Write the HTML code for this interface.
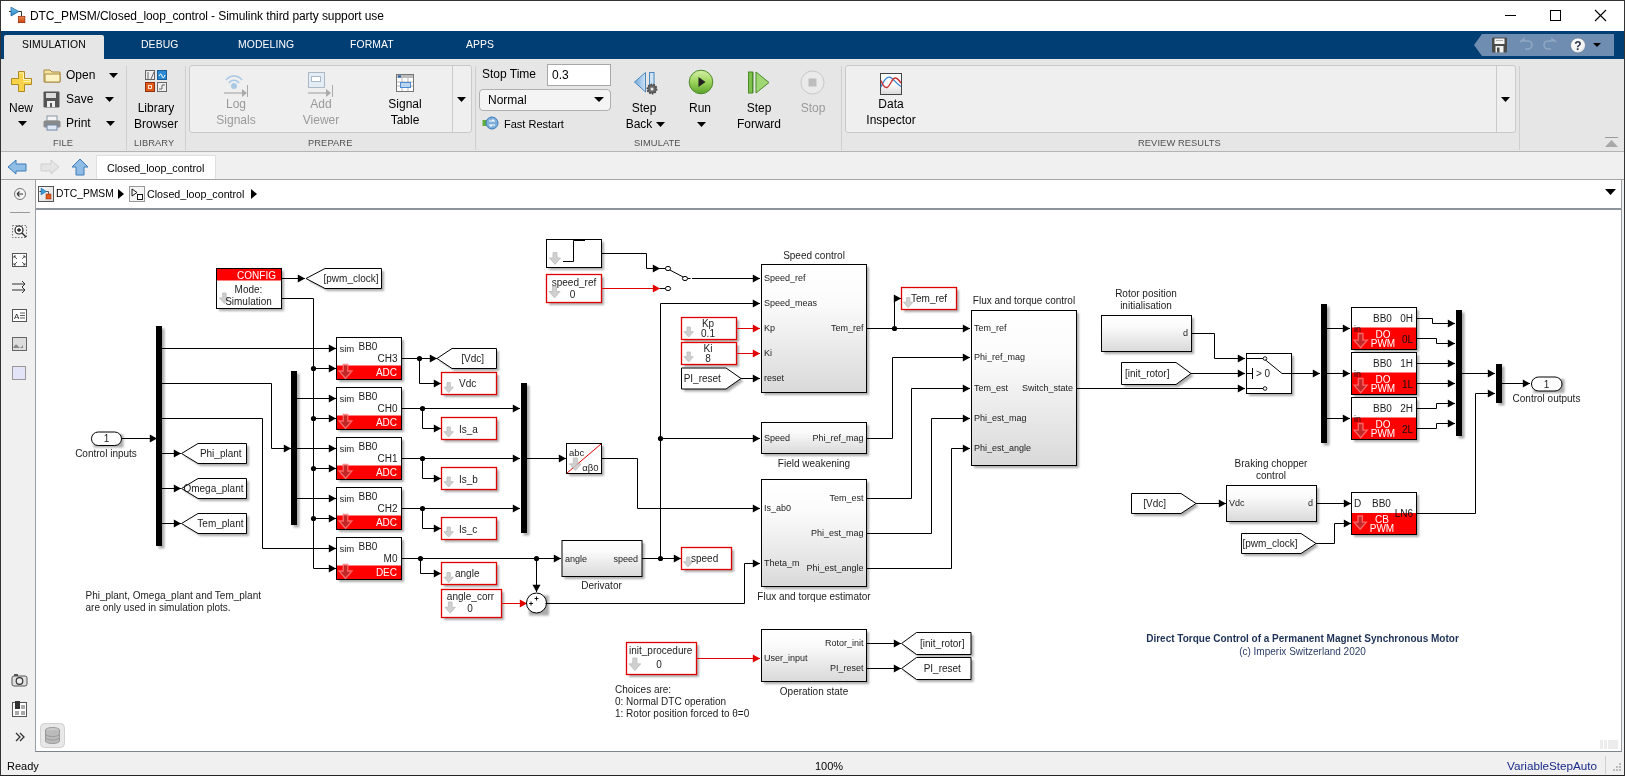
<!DOCTYPE html><html><head><meta charset="utf-8"><title>Simulink</title><style>
*{margin:0;padding:0;box-sizing:border-box}
html,body{width:1625px;height:776px;overflow:hidden;background:#f0f0f0;font-family:"Liberation Sans",sans-serif;color:#000}
#root{position:absolute;left:0;top:0;width:1625px;height:776px;will-change:transform}
.a{position:absolute}
.t{position:absolute;white-space:nowrap;font-size:12px;line-height:14px}
.tab{position:absolute;top:39px;font-size:10.4px;color:#fff;letter-spacing:0.1px}
.lbl{position:absolute;font-size:9.3px;color:#505050;letter-spacing:0.1px;top:138px}
.big{position:absolute;font-size:12px;line-height:16px;text-align:center;white-space:nowrap}
.dis{color:#9a9a9a}
</style></head><body><div id="root"><div class="a" style="left:0;top:0;width:1625px;height:31px;background:#fff"></div>
<svg class="a" style="left:0;top:0" width="30" height="30"><defs><linearGradient id="tig" x1="0" y1="0" x2="0" y2="1"><stop offset="0" stop-color="#7cc8f0"/><stop offset="1" stop-color="#1f7cc4"/></linearGradient><linearGradient id="tsg" x1="0" y1="0" x2="0" y2="1"><stop offset="0" stop-color="#f08a50"/><stop offset="1" stop-color="#c8400c"/></linearGradient></defs><line x1="9" y1="11.5" x2="11" y2="11.5" stroke="#333"/><polyline points="18.5,11.5 21.5,11.5 21.5,16" fill="none" stroke="#333"/><polygon points="11,7.2 11,16 19,11.5" fill="url(#tig)" stroke="#1a5e9a" stroke-width="0.7"/><rect x="18.3" y="16.3" width="6.6" height="6.4" fill="url(#tsg)" stroke="#8a2a08" stroke-width="0.7"/></svg>
<div class="t" style="left:30px;top:9px;font-size:12px;letter-spacing:-0.08px;color:#000">DTC_PMSM/Closed_loop_control - Simulink third party support use</div>
<svg class="a" style="left:1490px;top:0" width="135" height="31"><line x1="15" y1="15.5" x2="26" y2="15.5" stroke="#000"/><rect x="60.5" y="10.5" width="10" height="10" fill="none" stroke="#000"/><line x1="105" y1="10" x2="116" y2="21" stroke="#000" stroke-width="1.1"/><line x1="116" y1="10" x2="105" y2="21" stroke="#000" stroke-width="1.1"/></svg>
<div class="a" style="left:0;top:31px;width:1625px;height:28px;background:#003e73"></div>
<div class="a" style="left:4px;top:35px;width:100px;height:24px;background:#e6e6e6;border-radius:2px 2px 0 0"></div>
<div class="tab" style="left:22px;color:#000">SIMULATION</div>
<div class="tab" style="left:141px">DEBUG</div>
<div class="tab" style="left:238px">MODELING</div>
<div class="tab" style="left:350px">FORMAT</div>
<div class="tab" style="left:466px">APPS</div>
<svg class="a" style="left:1474px;top:34px" width="142" height="23"><polygon points="0,11 8,0 140,0 140,22 8,22" fill="#6f8db0"/><rect x="18" y="3.5" width="15" height="15" rx="1" fill="#4a4a4a"/><rect x="20.5" y="4.5" width="10" height="5.5" fill="#f4f4f4"/><line x1="22" y1="6.5" x2="29" y2="6.5" stroke="#999" stroke-width="0.8"/><rect x="21.5" y="12" width="8" height="6.5" fill="#f0f0f0"/><rect x="23" y="13.5" width="2.5" height="5" fill="#4a4a4a"/><path d="M46,8 l4,-3 v2 h4 a4,4 0 0 1 0,8 h-3" fill="none" stroke="#8fa7c3" stroke-width="1.6"/><path d="M82,8 l-4,-3 v2 h-4 a4,4 0 0 0 0,8 h3" fill="none" stroke="#8fa7c3" stroke-width="1.6"/><defs><radialGradient id="hg" cx="0.4" cy="0.3" r="0.8"><stop offset="0" stop-color="#fff"/><stop offset="0.7" stop-color="#f0f0f0"/><stop offset="1" stop-color="#b8c4d4"/></radialGradient></defs><circle cx="104" cy="11.5" r="7.5" fill="url(#hg)" stroke="#5a6f8c" stroke-width="0.6"/><text x="104" y="16" font-size="12" font-weight="bold" fill="#25324a" text-anchor="middle" font-family="Liberation Sans">?</text><polygon points="119,9 127,9 123,13" fill="#000"/></svg>
<div class="a" style="left:1px;top:59px;width:1623px;height:93px;background:#e6e6e6;border-bottom:1px solid #b4b4b4"></div>
<div class="a" style="left:126px;top:66px;width:1px;height:84px;background:#cfcfcf"></div>
<div class="a" style="left:185px;top:66px;width:1px;height:84px;background:#cfcfcf"></div>
<div class="a" style="left:475px;top:66px;width:1px;height:84px;background:#cfcfcf"></div>
<div class="a" style="left:841px;top:66px;width:1px;height:84px;background:#cfcfcf"></div>
<div class="a" style="left:1519px;top:66px;width:1px;height:84px;background:#cfcfcf"></div>
<div class="a" style="left:189px;top:65px;width:283px;height:68px;background:#efefef;border:1px solid #cacaca;border-radius:3px"></div>
<div class="a" style="left:452px;top:66px;width:1px;height:66px;background:#cacaca"></div>
<div class="a" style="left:845px;top:65px;width:671px;height:68px;background:#efefef;border:1px solid #cacaca;border-radius:3px"></div>
<div class="a" style="left:1496px;top:66px;width:1px;height:66px;background:#cacaca"></div>
<svg class="a" style="left:457px;top:97px" width="9" height="6"><polygon points="0,0 9,0 4.5,5" fill="#000"/></svg>
<svg class="a" style="left:1501px;top:97px" width="9" height="6"><polygon points="0,0 9,0 4.5,5" fill="#000"/></svg>
<svg class="a" style="left:10px;top:70px" width="24" height="24"><path d="M8.5,1.5 h6 v7 h7 v6 h-7 v7 h-6 v-7 h-7 v-6 h7 z" fill="#f7d34a" stroke="#b08a20" stroke-width="1"/><path d="M9.5,3 h4 v6.5 h7 v2 h-7" fill="none" stroke="#fff6c0" stroke-width="1"/></svg>
<div class="big" style="left:6px;top:100px;width:30px">New</div>
<svg class="a" style="left:17.5px;top:121px" width="9" height="6"><polygon points="0,0 9,0 4.5,5" fill="#000"/></svg>
<svg class="a" style="left:43px;top:68px" width="18" height="15"><path d="M1,2 h6 l2,2 h8 v10 h-16 z" fill="#f3e3a0" stroke="#a88a40"/><path d="M2,6 h15 v8 h-15 z" fill="#fdf2c4" stroke="#a88a40"/></svg>
<div class="t" style="left:66px;top:68px">Open</div>
<svg class="a" style="left:109px;top:73px" width="9" height="6"><polygon points="0,0 9,0 4.5,5" fill="#000"/></svg>
<svg class="a" style="left:43px;top:91px" width="17" height="17"><rect x="0.5" y="0.5" width="16" height="16" rx="1" fill="#555"/><rect x="3" y="2" width="10" height="5" fill="#ddd"/><rect x="4" y="10" width="8" height="6" fill="#eee"/><rect x="7" y="12" width="2" height="4" fill="#555"/></svg>
<div class="t" style="left:66px;top:92px">Save</div>
<svg class="a" style="left:105px;top:97px" width="9" height="6"><polygon points="0,0 9,0 4.5,5" fill="#000"/></svg>
<svg class="a" style="left:43px;top:115px" width="18" height="16"><rect x="4" y="1" width="10" height="5" fill="#f4f4f4" stroke="#8a98a8"/><rect x="0.5" y="5.5" width="17" height="7" rx="1.5" fill="#8a8a8a"/><rect x="4" y="10" width="10" height="5" fill="#dfe8f3" stroke="#6d87a8"/></svg>
<div class="t" style="left:66px;top:116px">Print</div>
<svg class="a" style="left:106px;top:121px" width="9" height="6"><polygon points="0,0 9,0 4.5,5" fill="#000"/></svg>
<div class="lbl" style="left:53px">FILE</div>
<svg class="a" style="left:145px;top:70px" width="23" height="24"><rect x="0.5" y="0.5" width="9" height="9" fill="#eee" stroke="#666"/><path d="M3,9 v-7 M6,9 l3,-7" stroke="#666"/><rect x="12.5" y="0.5" width="9" height="9" fill="#2a8ad4" stroke="#1a5e9a"/><path d="M14,6 q2,-4 3,0 t3,-1" stroke="#fff" fill="none"/><rect x="0.5" y="12.5" width="9" height="9" fill="#e05a1a" stroke="#903010"/><rect x="3.5" y="15.5" width="3" height="3" fill="none" stroke="#fff" stroke-width="0.8"/><rect x="12.5" y="12.5" width="9" height="9" fill="#eee" stroke="#666"/><path d="M14,19 h3 v-4 h3" stroke="#666" fill="none"/></svg>
<div class="big" style="left:131px;top:100px;width:50px">Library<br>Browser</div>
<div class="lbl" style="left:134px">LIBRARY</div>
<svg class="a" style="left:223px;top:72px" width="27" height="25"><path d="M3,8 a10,10 0 0 1 16,0 M6,11 a6,6 0 0 1 10,0" stroke="#a9c8e6" stroke-width="1.6" fill="none"/><circle cx="11" cy="14" r="3" fill="#a9c8e6"/><line x1="1" y1="21" x2="20" y2="21" stroke="#aaa" stroke-width="1.2"/><polygon points="19,17 19,25 24,21" fill="#aaa"/><line x1="24.5" y1="13" x2="24.5" y2="25" stroke="#aaa"/></svg>
<div class="big dis" style="left:211px;top:96px;width:50px">Log<br>Signals</div>
<svg class="a" style="left:308px;top:72px" width="26" height="25"><rect x="0.5" y="0.5" width="16" height="15" fill="#e4ecf4" stroke="#aab8c8"/><rect x="3.5" y="4.5" width="9" height="5" fill="#fff" stroke="#aab8c8"/><line x1="0" y1="21" x2="19" y2="21" stroke="#aaa" stroke-width="1.2"/><polygon points="18,17 18,25 23,21" fill="#aaa"/><line x1="24.5" y1="13" x2="24.5" y2="25" stroke="#aaa"/></svg>
<div class="big dis" style="left:296px;top:96px;width:50px">Add<br>Viewer</div>
<svg class="a" style="left:396px;top:74px" width="19" height="19"><rect x="0.5" y="0.5" width="17" height="17" fill="#fff" stroke="#777"/><rect x="1" y="1" width="16" height="3" fill="#bbb"/><rect x="2" y="1.5" width="3" height="2" fill="#1f5fb0"/><path d="M1,8 h16 M1,12 h16 M6,4 v13 M12,4 v13" stroke="#999" stroke-width="0.7"/><rect x="4.5" y="8.5" width="10" height="5" fill="#b9d5f0" stroke="#4d8ad0"/></svg>
<div class="big" style="left:380px;top:96px;width:50px">Signal<br>Table</div>
<div class="lbl" style="left:308px">PREPARE</div>
<div class="t" style="left:482px;top:67px">Stop Time</div>
<div class="a" style="left:547px;top:64px;width:64px;height:22px;background:#fff;border:1px solid #a8a8a8"></div>
<div class="t" style="left:552px;top:68px">0.3</div>
<div class="a" style="left:479px;top:89px;width:132px;height:22px;background:#f4f4f4;border:1px solid #b0b0b0;border-radius:4px"></div>
<div class="t" style="left:488px;top:93px">Normal</div>
<svg class="a" style="left:593.5px;top:97px" width="10" height="6"><polygon points="0,0 10,0 5.0,5" fill="#000"/></svg>
<svg class="a" style="left:482px;top:116px" width="17" height="14"><rect x="0.5" y="4" width="5" height="6" fill="#5fae3c"/><circle cx="10" cy="7" r="6" fill="#7fb0dc" stroke="#3e79b8"/><path d="M7,5 h5 l-1.5,-1.5 M13,9 h-5 l1.5,1.5" stroke="#fff" fill="none" stroke-width="1.1"/></svg>
<div class="t" style="left:504px;top:117px;font-size:11px">Fast Restart</div>
<svg class="a" style="left:633px;top:71px" width="25" height="24"><defs><linearGradient id="sbg" x1="0" y1="0" x2="1" y2="0"><stop offset="0" stop-color="#6fa8dc"/><stop offset="1" stop-color="#cfe3f5"/></linearGradient></defs><polygon points="12.5,1.5 12.5,21 1.5,11" fill="url(#sbg)" stroke="#4b86bd"/><rect x="16.5" y="1.5" width="4.5" height="15" fill="#cfe3f5" stroke="#4b86bd"/><circle cx="19" cy="18" r="4.6" fill="#555" stroke="#444" stroke-width="1.6" stroke-dasharray="1.6,1.2"/><circle cx="19" cy="18" r="3.6" fill="#6a6a6a"/><circle cx="19" cy="18" r="1.5" fill="#e8e8e8"/></svg>
<div class="big" style="left:620px;top:100px;width:48px">Step<br>Back&nbsp;&nbsp;&nbsp;</div>
<svg class="a" style="left:656px;top:122px" width="9" height="6"><polygon points="0,0 9,0 4.5,5" fill="#000"/></svg>
<svg class="a" style="left:688px;top:69px" width="26" height="26"><defs><linearGradient id="rng" x1="0" y1="0" x2="0" y2="1"><stop offset="0" stop-color="#d6f0a8"/><stop offset="0.5" stop-color="#9cd45c"/><stop offset="1" stop-color="#5aa02a"/></linearGradient></defs><circle cx="13" cy="13" r="11.8" fill="url(#rng)" stroke="#4d8a2a"/><polygon points="10.5,8 10.5,18 17.5,13" fill="#222"/></svg>
<div class="big" style="left:680px;top:100px;width:40px">Run</div>
<svg class="a" style="left:696.5px;top:122px" width="9" height="6"><polygon points="0,0 9,0 4.5,5" fill="#000"/></svg>
<svg class="a" style="left:748px;top:71px" width="24" height="23"><rect x="0.5" y="1" width="4" height="21" fill="#7cc14a" stroke="#4d8a2a"/><polygon points="8,1 8,22 21,11.5" fill="#9fd873" stroke="#4d8a2a"/><line x1="5" y1="1" x2="5" y2="22" stroke="#4d8a2a"/></svg>
<div class="big" style="left:730px;top:100px;width:58px">Step<br>Forward</div>
<svg class="a" style="left:800px;top:70px" width="25" height="25"><circle cx="12.5" cy="12.5" r="11.5" fill="#eaeaea" stroke="#c8c8c8"/><rect x="8.5" y="8.5" width="8" height="8" fill="#bdbdbd"/></svg>
<div class="big dis" style="left:792px;top:100px;width:42px">Stop</div>
<div class="lbl" style="left:634px">SIMULATE</div>
<svg class="a" style="left:880px;top:73px" width="23" height="22"><defs><linearGradient id="dig" x1="0" y1="0" x2="0" y2="1"><stop offset="0.5" stop-color="#fff"/><stop offset="1" stop-color="#d8d8d8"/></linearGradient></defs><rect x="0.5" y="0.5" width="21" height="21" fill="url(#dig)" stroke="#444"/><path d="M1,14 C5,4 9,3 11.5,5 S17,11 21,13.5" stroke="#3a86d0" fill="none" stroke-width="1.4"/><path d="M1,7.5 C3,13 5,15 7,14.5 C10,13.5 12,5 15,5 C17.5,5 19,7 21,10" stroke="#c83030" fill="none" stroke-width="1.4"/></svg>
<div class="big" style="left:861px;top:96px;width:60px">Data<br>Inspector</div>
<div class="lbl" style="left:1138px">REVIEW RESULTS</div>
<svg class="a" style="left:1604px;top:137px" width="15" height="12"><line x1="1" y1="0.5" x2="14" y2="0.5" stroke="#999"/><polygon points="1,10 14,10 7.5,3" fill="#a8a8a8"/></svg>
<div class="a" style="left:1px;top:152px;width:1623px;height:28px;background:#f0f0f0;border-bottom:1px solid #a4a4a4"></div>
<svg class="a" style="left:7px;top:158px" width="90" height="19"><polygon points="1,9 9,2 9,6 19,6 19,13 9,13 9,16" fill="#8fbde6" stroke="#3c7ab8"/><polygon points="59,9 51,2 51,6 41,6 41,13 51,13 51,16" fill="#e4e4e4" stroke="#cfcfcf" transform="translate(-7,0)"/><polygon points="73,1 81,9 77,9 77,17 69,17 69,9 65,9" fill="#8fbde6" stroke="#3c7ab8"/></svg>
<div class="a" style="left:96px;top:155px;width:120px;height:24px;background:#fff;border:1px solid #e0e0e0;border-bottom:none"></div>
<div class="t" style="left:107px;top:161px;font-size:10.7px">Closed_loop_control</div>
<div class="a" style="left:35px;top:179px;width:1px;height:573px;background:#a0a0a0"></div>
<div class="a" style="left:36px;top:180px;width:1586px;height:30px;background:#fff;border-bottom:2px solid #8e949c;border-right:1px solid #9aa0a8"></div>
<svg class="a" style="left:38px;top:186px" width="230" height="16"><rect x="0.5" y="0.5" width="15" height="15" fill="url(#bcg)" stroke="#555"/><defs><linearGradient id="bcg" x1="0" y1="0" x2="1" y2="1"><stop offset="0" stop-color="#fafafa"/><stop offset="1" stop-color="#dcdcdc"/></linearGradient></defs><line x1="1.5" y1="5.5" x2="3" y2="5.5" stroke="#333"/><polyline points="8,5.5 10.5,5.5 10.5,8" fill="none" stroke="#333" stroke-width="0.8"/><polygon points="3,2 3,9 8.5,5.5" fill="#3a9ad8" stroke="#1a5e9a" stroke-width="0.5"/><rect x="8" y="8" width="5" height="5" fill="#e05a1a" stroke="#8a2a08" stroke-width="0.5"/><polygon points="80,3 80,13 86,8" fill="#000"/><rect x="91.5" y="0.5" width="15" height="15" fill="#f4f4f4" stroke="#999"/><polygon points="94,3 94,10 99,6.5" fill="none" stroke="#000" stroke-width="0.9"/><rect x="99.5" y="8.5" width="5" height="5" fill="#fff" stroke="#000" stroke-width="0.9"/><polygon points="213,3 213,13 219,8" fill="#000"/></svg>
<div class="t" style="left:56px;top:187px;font-size:10.3px">DTC_PMSM</div>
<div class="t" style="left:147px;top:187px;font-size:10.7px">Closed_loop_control</div>
<svg class="a" style="left:1605px;top:189px" width="12" height="7"><polygon points="0,0 11,0 5.5,6" fill="#000"/></svg>
<svg class="a" style="left:6px;top:182px" width="30" height="570"><circle cx="14" cy="12" r="5.5" fill="#f4f4f4" stroke="#777"/><path d="M11,12 h6 M11,12 l2.5,-2.5 M11,12 l2.5,2.5" stroke="#333" stroke-width="1.1"/><line x1="4" y1="30.5" x2="24" y2="30.5" stroke="#999"/><rect x="6.5" y="43.5" width="14" height="12" fill="none" stroke="#777" stroke-dasharray="1.5,1.5"/><circle cx="13" cy="48" r="4" fill="#fff" stroke="#222" stroke-width="1.2"/><path d="M11,48 h4 M13,46 v4 M16,51 l4,4" stroke="#222" stroke-width="1.3"/><rect x="6.5" y="71.5" width="14" height="13" fill="#fff" stroke="#555"/><path d="M8,74 l3,3 M8,74 h2 M8,74 v2 M19,74 l-3,3 M19,74 h-2 M19,74 v2 M8,83 l3,-3 M8,83 h2 M8,83 v-2 M19,83 l-3,-3 M19,83 h-2 M19,83 v-2" stroke="#333" stroke-width="0.8"/><path d="M6,102 h13 M6,108 h13 M16,99 l3,3 l-3,3 M16,105 l3,3 l-3,3" stroke="#333" fill="none"/><rect x="6.5" y="127.5" width="14" height="12" fill="#fff" stroke="#555"/><text x="8" y="137" font-size="8" font-family="Liberation Sans" fill="#222">A</text><path d="M14,131 h5 M14,133.5 h5 M14,136 h5" stroke="#333" stroke-width="0.8"/><rect x="6.5" y="155.5" width="14" height="13" fill="#ddd" stroke="#666"/><path d="M7,166 q3,-6 5,-2 t5,-1 v3 h-10 z" fill="#888"/><rect x="6.5" y="184.5" width="13" height="13" fill="#e4e4f8" stroke="#999"/><rect x="6" y="494" width="15" height="10" rx="2" fill="#e0e0e0" stroke="#555"/><circle cx="13.5" cy="499" r="3.3" fill="#eee" stroke="#333" stroke-width="1.2"/><rect x="8" y="492" width="4" height="2" fill="#555"/><rect x="6.5" y="520.5" width="14" height="14" fill="#fff" stroke="#555"/><rect x="9" y="519" width="5" height="8" fill="#333"/><rect x="15" y="523" width="4" height="4" fill="#aaa"/><rect x="9" y="529" width="4" height="4" fill="#aaa"/><rect x="15" y="529" width="4" height="4" fill="#aaa"/><path d="M10,551 l4,4 l-4,4 M14,551 l4,4 l-4,4" stroke="#333" fill="none" stroke-width="1.3"/></svg>
<div class="a" style="left:35px;top:210px;width:1587px;height:542px;background:#fff;border-left:1px solid #9aa0a8;border-bottom:1px solid #7e848c;border-right:1px solid #9aa0a8"></div>
<svg class="a" style="left:40px;top:723px" width="26" height="26"><rect x="0.5" y="0.5" width="24" height="24" rx="4" fill="#e8e8e8" stroke="#d0d0d0"/><ellipse cx="12.5" cy="7" rx="7" ry="2.5" fill="#ccc" stroke="#999"/><path d="M5.5,7 v11 a7,2.5 0 0 0 14,0 v-11" fill="#bbb" stroke="#999"/><path d="M5.5,11 a7,2.5 0 0 0 14,0 M5.5,14.5 a7,2.5 0 0 0 14,0" fill="none" stroke="#999"/></svg>
<svg class="a" style="left:1600px;top:740px" width="20" height="10"><rect x="0" y="0" width="3" height="9" fill="#ececec"/><rect x="4" y="0" width="3" height="9" fill="#ececec"/><rect x="8" y="0" width="10" height="9" fill="#ececec"/></svg>
<svg class="a" style="left:0;top:0" width="1625" height="776" font-family="Liberation Sans, sans-serif"><defs><filter id="sh" x="-20%" y="-20%" width="140%" height="140%"><feGaussianBlur stdDeviation="1.2"/></filter><linearGradient id="grad" x1="0" y1="0" x2="0" y2="1"><stop offset="0" stop-color="#ffffff"/><stop offset="0.3" stop-color="#fbfbfb"/><stop offset="1" stop-color="#d9d9d9"/></linearGradient></defs><rect x="219" y="271" width="65" height="40" fill="#000" opacity="0.33" filter="url(#sh)"/>
<rect x="216.5" y="268.5" width="65" height="40" fill="#fff" stroke="#000" stroke-width="1"/>
<rect x="217" y="269" width="64" height="11.5" fill="#ff0000"/>
<text x="276" y="279" font-size="10" text-anchor="end" fill="#fff" font-weight="normal" >CONFIG</text>
<text x="248.5" y="293" font-size="10" text-anchor="middle" fill="#1c1c1c" font-weight="normal" >Mode:</text>
<polygon points="222.65,293 226.1,293 226.1,297.88 229.25,297.88 224.38,303.5 219.5,297.88 222.65,297.88" fill="#c8c8c8" stroke="#b0b0b0" stroke-width="0.8" opacity="0.85"/>
<text x="248.5" y="304.5" font-size="10" text-anchor="middle" fill="#1c1c1c" font-weight="normal" >Simulation</text>
<polyline points="282,278.5 305,278.5" fill="none" stroke="#000" stroke-width="1" />
<polygon points="305,278.5 297.8,274.5 297.8,282.5" fill="#000"/>
<polygon points="308.5,281 327.5,271 384,271 384,291 327.5,291" fill="#000" opacity="0.33" filter="url(#sh)"/>
<polygon points="306,278.5 325,268.5 381.5,268.5 381.5,288.5 325,288.5" fill="#fff" stroke="#000" stroke-width="1"/>
<text x="378.5" y="282.1" font-size="10" text-anchor="end" fill="#1c1c1c" font-weight="normal" >[pwm_clock]</text>
<polyline points="282,298.5 313.5,298.5 313.5,568.5 336,568.5" fill="none" stroke="#000" stroke-width="1" />
<polygon points="336,568.5 328.8,564.5 328.8,572.5" fill="#000"/>
<circle cx="313.5" cy="368.5" r="2.6" fill="#000"/>
<polyline points="313.5,368.5 336,368.5" fill="none" stroke="#000" stroke-width="1" />
<polygon points="336,368.5 328.8,364.5 328.8,372.5" fill="#000"/>
<circle cx="313.5" cy="418.5" r="2.6" fill="#000"/>
<polyline points="313.5,418.5 336,418.5" fill="none" stroke="#000" stroke-width="1" />
<polygon points="336,418.5 328.8,414.5 328.8,422.5" fill="#000"/>
<circle cx="313.5" cy="468.5" r="2.6" fill="#000"/>
<polyline points="313.5,468.5 336,468.5" fill="none" stroke="#000" stroke-width="1" />
<polygon points="336,468.5 328.8,464.5 328.8,472.5" fill="#000"/>
<circle cx="313.5" cy="518.5" r="2.6" fill="#000"/>
<polyline points="313.5,518.5 336,518.5" fill="none" stroke="#000" stroke-width="1" />
<polygon points="336,518.5 328.8,514.5 328.8,522.5" fill="#000"/>
<rect x="158.5" y="328.5" width="6" height="220" fill="#000" opacity="0.33" filter="url(#sh)"/>
<rect x="156" y="326" width="6" height="220" fill="#000"/>
<polyline points="162,348.5 336,348.5" fill="none" stroke="#000" stroke-width="1" />
<polygon points="336,348.5 328.8,344.5 328.8,352.5" fill="#000"/>
<polyline points="162,383.5 271.5,383.5 271.5,448.5 291,448.5" fill="none" stroke="#000" stroke-width="1" />
<polygon points="291,448.5 283.8,444.5 283.8,452.5" fill="#000"/>
<polyline points="162,418.5 262.5,418.5 262.5,548.5 336,548.5" fill="none" stroke="#000" stroke-width="1" />
<polygon points="336,548.5 328.8,544.5 328.8,552.5" fill="#000"/>
<polyline points="162,453.5 181,453.5" fill="none" stroke="#000" stroke-width="1" />
<polygon points="181,453.5 173.8,449.5 173.8,457.5" fill="#000"/>
<polygon points="184,456 200.5,446 249,446 249,466 200.5,466" fill="#000" opacity="0.33" filter="url(#sh)"/>
<polygon points="181.5,453.5 198,443.5 246.5,443.5 246.5,463.5 198,463.5" fill="#fff" stroke="#000" stroke-width="1"/>
<text x="220.75" y="457.1" font-size="10" text-anchor="middle" fill="#1c1c1c" font-weight="normal" >Phi_plant</text>
<polyline points="162,488.5 181,488.5" fill="none" stroke="#000" stroke-width="1" />
<polygon points="181,488.5 173.8,484.5 173.8,492.5" fill="#000"/>
<polygon points="184,491 200.5,481 249,481 249,501 200.5,501" fill="#000" opacity="0.33" filter="url(#sh)"/>
<polygon points="181.5,488.5 198,478.5 246.5,478.5 246.5,498.5 198,498.5" fill="#fff" stroke="#000" stroke-width="1"/>
<text x="243.5" y="492.1" font-size="10" text-anchor="end" fill="#1c1c1c" font-weight="normal" >Omega_plant</text>
<polyline points="162,523.5 181,523.5" fill="none" stroke="#000" stroke-width="1" />
<polygon points="181,523.5 173.8,519.5 173.8,527.5" fill="#000"/>
<polygon points="184,526 200.5,516 249,516 249,536 200.5,536" fill="#000" opacity="0.33" filter="url(#sh)"/>
<polygon points="181.5,523.5 198,513.5 246.5,513.5 246.5,533.5 198,533.5" fill="#fff" stroke="#000" stroke-width="1"/>
<text x="243.5" y="527.1" font-size="10" text-anchor="end" fill="#1c1c1c" font-weight="normal" >Tem_plant</text>
<rect x="93.5" y="434.5" width="30" height="13" fill="#000" opacity="0.33" filter="url(#sh)"/>
<rect x="91.5" y="432" width="30" height="13.5" rx="6.7" fill="#fff" stroke="#000"/>
<text x="106.5" y="442" font-size="10" text-anchor="middle" fill="#1c1c1c" font-weight="normal" >1</text>
<text x="106" y="457" font-size="10" text-anchor="middle" fill="#1c1c1c" font-weight="normal" >Control inputs</text>
<polyline points="121.5,438.5 157,438.5" fill="none" stroke="#000" stroke-width="1" />
<polygon points="157,438.5 149.8,434.5 149.8,442.5" fill="#000"/>
<rect x="293.5" y="373.5" width="6" height="154" fill="#000" opacity="0.33" filter="url(#sh)"/>
<rect x="291" y="371" width="6" height="154" fill="#000"/>
<polyline points="297,398.5 336,398.5" fill="none" stroke="#000" stroke-width="1" />
<polygon points="336,398.5 328.8,394.5 328.8,402.5" fill="#000"/>
<polyline points="297,448.5 336,448.5" fill="none" stroke="#000" stroke-width="1" />
<polygon points="336,448.5 328.8,444.5 328.8,452.5" fill="#000"/>
<polyline points="297,498.5 336,498.5" fill="none" stroke="#000" stroke-width="1" />
<polygon points="336,498.5 328.8,494.5 328.8,502.5" fill="#000"/>
<rect x="339" y="340" width="65" height="42" fill="#000" opacity="0.33" filter="url(#sh)"/>
<rect x="336.5" y="337.5" width="65" height="42" fill="#fff" stroke="#000" stroke-width="1"/>
<rect x="337" y="365.5" width="64" height="13.5" fill="#ff0000"/>
<text x="339.5" y="351.5" font-size="9.5" text-anchor="start" fill="#1c1c1c" font-weight="normal" >sim</text>
<text x="358.5" y="350" font-size="10" text-anchor="start" fill="#1c1c1c" font-weight="normal" >BB0</text>
<text x="397.5" y="362" font-size="10" text-anchor="end" fill="#1c1c1c" font-weight="normal" >CH3</text>
<text x="397" y="375.8" font-size="10" text-anchor="end" fill="#fff" font-weight="normal" >ADC</text>
<polygon points="343.2,364.5 347.8,364.5 347.8,371 352,371 345.5,378.5 339,371 343.2,371" fill="#b83030" stroke="#ff7a7a" stroke-width="1.3" opacity="0.85"/>
<rect x="339" y="390" width="65" height="42" fill="#000" opacity="0.33" filter="url(#sh)"/>
<rect x="336.5" y="387.5" width="65" height="42" fill="#fff" stroke="#000" stroke-width="1"/>
<rect x="337" y="415.5" width="64" height="13.5" fill="#ff0000"/>
<text x="339.5" y="401.5" font-size="9.5" text-anchor="start" fill="#1c1c1c" font-weight="normal" >sim</text>
<text x="358.5" y="400" font-size="10" text-anchor="start" fill="#1c1c1c" font-weight="normal" >BB0</text>
<text x="397.5" y="412" font-size="10" text-anchor="end" fill="#1c1c1c" font-weight="normal" >CH0</text>
<text x="397" y="425.8" font-size="10" text-anchor="end" fill="#fff" font-weight="normal" >ADC</text>
<polygon points="343.2,414.5 347.8,414.5 347.8,421 352,421 345.5,428.5 339,421 343.2,421" fill="#b83030" stroke="#ff7a7a" stroke-width="1.3" opacity="0.85"/>
<rect x="339" y="440" width="65" height="42" fill="#000" opacity="0.33" filter="url(#sh)"/>
<rect x="336.5" y="437.5" width="65" height="42" fill="#fff" stroke="#000" stroke-width="1"/>
<rect x="337" y="465.5" width="64" height="13.5" fill="#ff0000"/>
<text x="339.5" y="451.5" font-size="9.5" text-anchor="start" fill="#1c1c1c" font-weight="normal" >sim</text>
<text x="358.5" y="450" font-size="10" text-anchor="start" fill="#1c1c1c" font-weight="normal" >BB0</text>
<text x="397.5" y="462" font-size="10" text-anchor="end" fill="#1c1c1c" font-weight="normal" >CH1</text>
<text x="397" y="475.8" font-size="10" text-anchor="end" fill="#fff" font-weight="normal" >ADC</text>
<polygon points="343.2,464.5 347.8,464.5 347.8,471 352,471 345.5,478.5 339,471 343.2,471" fill="#b83030" stroke="#ff7a7a" stroke-width="1.3" opacity="0.85"/>
<rect x="339" y="490" width="65" height="42" fill="#000" opacity="0.33" filter="url(#sh)"/>
<rect x="336.5" y="487.5" width="65" height="42" fill="#fff" stroke="#000" stroke-width="1"/>
<rect x="337" y="515.5" width="64" height="13.5" fill="#ff0000"/>
<text x="339.5" y="501.5" font-size="9.5" text-anchor="start" fill="#1c1c1c" font-weight="normal" >sim</text>
<text x="358.5" y="500" font-size="10" text-anchor="start" fill="#1c1c1c" font-weight="normal" >BB0</text>
<text x="397.5" y="512" font-size="10" text-anchor="end" fill="#1c1c1c" font-weight="normal" >CH2</text>
<text x="397" y="525.8" font-size="10" text-anchor="end" fill="#fff" font-weight="normal" >ADC</text>
<polygon points="343.2,514.5 347.8,514.5 347.8,521 352,521 345.5,528.5 339,521 343.2,521" fill="#b83030" stroke="#ff7a7a" stroke-width="1.3" opacity="0.85"/>
<rect x="339" y="540" width="65" height="42" fill="#000" opacity="0.33" filter="url(#sh)"/>
<rect x="336.5" y="537.5" width="65" height="42" fill="#fff" stroke="#000" stroke-width="1"/>
<rect x="337" y="565.5" width="64" height="13.5" fill="#ff0000"/>
<text x="339.5" y="551.5" font-size="9.5" text-anchor="start" fill="#1c1c1c" font-weight="normal" >sim</text>
<text x="358.5" y="550" font-size="10" text-anchor="start" fill="#1c1c1c" font-weight="normal" >BB0</text>
<text x="397.5" y="562" font-size="10" text-anchor="end" fill="#1c1c1c" font-weight="normal" >M0</text>
<text x="397" y="575.8" font-size="10" text-anchor="end" fill="#fff" font-weight="normal" >DEC</text>
<polygon points="343.2,564.5 347.8,564.5 347.8,571 352,571 345.5,578.5 339,571 343.2,571" fill="#b83030" stroke="#ff7a7a" stroke-width="1.3" opacity="0.85"/>
<polyline points="401.5,358.5 437,358.5" fill="none" stroke="#000" stroke-width="1" />
<polygon points="437,358.5 429.8,354.5 429.8,362.5" fill="#000"/>
<circle cx="419.5" cy="358.5" r="2.6" fill="#000"/>
<polyline points="419.5,358.5 419.5,383.5 441,383.5" fill="none" stroke="#000" stroke-width="1" />
<polygon points="441,383.5 433.8,379.5 433.8,387.5" fill="#000"/>
<polygon points="439.5,361 454.5,351 499,351 499,371 454.5,371" fill="#000" opacity="0.33" filter="url(#sh)"/>
<polygon points="437,358.5 452,348.5 496.5,348.5 496.5,368.5 452,368.5" fill="#fff" stroke="#000" stroke-width="1"/>
<text x="472.75" y="362.1" font-size="10" text-anchor="middle" fill="#1c1c1c" font-weight="normal" >[Vdc]</text>
<rect x="444" y="375" width="55" height="22" fill="#000" opacity="0.33" filter="url(#sh)"/>
<rect x="441.5" y="372.5" width="55" height="22" fill="#fff" stroke="#e00000" stroke-width="1.3"/>
<polygon points="447.02,382.5 450.34,382.5 450.34,387.18 453.36,387.18 448.68,392.58 444,387.18 447.02,387.18" fill="#c8c8c8" stroke="#b0b0b0" stroke-width="0.8" opacity="0.85"/>
<text x="459" y="387" font-size="10" text-anchor="start" fill="#1c1c1c" font-weight="normal" >Vdc</text>
<polyline points="401.5,408.5 520,408.5" fill="none" stroke="#000" stroke-width="1" />
<polygon points="520,408.5 512.8,404.5 512.8,412.5" fill="#000"/>
<circle cx="422.5" cy="408.5" r="2.6" fill="#000"/>
<polyline points="422.5,408.5 422.5,428.5 441,428.5" fill="none" stroke="#000" stroke-width="1" />
<polygon points="441,428.5 433.8,424.5 433.8,432.5" fill="#000"/>
<rect x="444" y="420" width="55" height="22" fill="#000" opacity="0.33" filter="url(#sh)"/>
<rect x="441.5" y="417.5" width="55" height="22" fill="#fff" stroke="#e00000" stroke-width="1.3"/>
<polygon points="447.02,427 450.34,427 450.34,431.68 453.36,431.68 448.68,437.08 444,431.68 447.02,431.68" fill="#c8c8c8" stroke="#b0b0b0" stroke-width="0.8" opacity="0.85"/>
<text x="459" y="432.5" font-size="10" text-anchor="start" fill="#1c1c1c" font-weight="normal" >Is_a</text>
<polyline points="401.5,458.5 520,458.5" fill="none" stroke="#000" stroke-width="1" />
<polygon points="520,458.5 512.8,454.5 512.8,462.5" fill="#000"/>
<circle cx="422.5" cy="458.5" r="2.6" fill="#000"/>
<polyline points="422.5,458.5 422.5,478.5 441,478.5" fill="none" stroke="#000" stroke-width="1" />
<polygon points="441,478.5 433.8,474.5 433.8,482.5" fill="#000"/>
<rect x="444" y="470" width="55" height="22" fill="#000" opacity="0.33" filter="url(#sh)"/>
<rect x="441.5" y="467.5" width="55" height="22" fill="#fff" stroke="#e00000" stroke-width="1.3"/>
<polygon points="447.02,477 450.34,477 450.34,481.68 453.36,481.68 448.68,487.08 444,481.68 447.02,481.68" fill="#c8c8c8" stroke="#b0b0b0" stroke-width="0.8" opacity="0.85"/>
<text x="459" y="482.5" font-size="10" text-anchor="start" fill="#1c1c1c" font-weight="normal" >Is_b</text>
<polyline points="401.5,508.5 520,508.5" fill="none" stroke="#000" stroke-width="1" />
<polygon points="520,508.5 512.8,504.5 512.8,512.5" fill="#000"/>
<circle cx="422.5" cy="508.5" r="2.6" fill="#000"/>
<polyline points="422.5,508.5 422.5,528.5 441,528.5" fill="none" stroke="#000" stroke-width="1" />
<polygon points="441,528.5 433.8,524.5 433.8,532.5" fill="#000"/>
<rect x="444" y="520" width="55" height="22" fill="#000" opacity="0.33" filter="url(#sh)"/>
<rect x="441.5" y="517.5" width="55" height="22" fill="#fff" stroke="#e00000" stroke-width="1.3"/>
<polygon points="447.02,527 450.34,527 450.34,531.68 453.36,531.68 448.68,537.08 444,531.68 447.02,531.68" fill="#c8c8c8" stroke="#b0b0b0" stroke-width="0.8" opacity="0.85"/>
<text x="459" y="532.5" font-size="10" text-anchor="start" fill="#1c1c1c" font-weight="normal" >Is_c</text>
<polyline points="401.5,558.5 561,558.5" fill="none" stroke="#000" stroke-width="1" />
<polygon points="561,558.5 553.8,554.5 553.8,562.5" fill="#000"/>
<circle cx="420.5" cy="558.5" r="2.6" fill="#000"/>
<polyline points="420.5,558.5 420.5,573.5 441,573.5" fill="none" stroke="#000" stroke-width="1" />
<polygon points="441,573.5 433.8,569.5 433.8,577.5" fill="#000"/>
<rect x="444" y="565" width="55" height="22" fill="#000" opacity="0.33" filter="url(#sh)"/>
<rect x="441.5" y="562.5" width="55" height="22" fill="#fff" stroke="#e00000" stroke-width="1.3"/>
<polygon points="447.02,572.5 450.34,572.5 450.34,577.18 453.36,577.18 448.68,582.58 444,577.18 447.02,577.18" fill="#c8c8c8" stroke="#b0b0b0" stroke-width="0.8" opacity="0.85"/>
<text x="455" y="577" font-size="10" text-anchor="start" fill="#1c1c1c" font-weight="normal" >angle</text>
<circle cx="536.5" cy="558.5" r="2.6" fill="#000"/>
<polyline points="536.5,558.5 536.5,592" fill="none" stroke="#000" stroke-width="1" />
<polygon points="536.5,592 532.5,584.8 540.5,584.8" fill="#000"/>
<rect x="444" y="592" width="60" height="28" fill="#000" opacity="0.33" filter="url(#sh)"/>
<rect x="441.5" y="589.5" width="60" height="28" fill="#fff" stroke="#e00000" stroke-width="1.3"/>
<text x="470.5" y="600" font-size="10" text-anchor="middle" fill="#1c1c1c" font-weight="normal" >angle_corr</text>
<text x="470" y="612" font-size="10" text-anchor="middle" fill="#1c1c1c" font-weight="normal" >0</text>
<polygon points="448.36,602 452.04,602 452.04,607.2 455.4,607.2 450.2,613.2 445,607.2 448.36,607.2" fill="#c8c8c8" stroke="#b0b0b0" stroke-width="0.8" opacity="0.85"/>
<polyline points="502,603.5 527,603.5" fill="none" stroke="#e00000" stroke-width="1" />
<polygon points="527,603.5 519.8,599.5 519.8,607.5" fill="#e00000"/>
<rect x="529" y="595.5" width="20" height="20" fill="#000" opacity="0.33" filter="url(#sh)"/>
<circle cx="536.5" cy="603" r="10" fill="#fff" stroke="#000"/>
<polyline points="534.5,598.5 538.5,598.5" fill="none" stroke="#000" stroke-width="0.9" />
<polyline points="536.5,596.5 536.5,600.5" fill="none" stroke="#000" stroke-width="0.9" />
<polyline points="529,603.5 533,603.5" fill="none" stroke="#000" stroke-width="0.9" />
<polyline points="531,601.5 531,605.5" fill="none" stroke="#000" stroke-width="0.9" />
<polyline points="545.5,603.5 744.5,603.5 744.5,563.5 760,563.5" fill="none" stroke="#000" stroke-width="1" />
<polygon points="760,563.5 752.8,559.5 752.8,567.5" fill="#000"/>
<rect x="523.5" y="385.5" width="6" height="150" fill="#000" opacity="0.33" filter="url(#sh)"/>
<rect x="521" y="383" width="6" height="150" fill="#000"/>
<polyline points="527,458.5 566,458.5" fill="none" stroke="#000" stroke-width="1" />
<polygon points="566,458.5 558.8,454.5 558.8,462.5" fill="#000"/>
<rect x="569" y="446" width="35" height="30" fill="#000" opacity="0.33" filter="url(#sh)"/>
<rect x="566.5" y="443.5" width="35" height="30" fill="#fff" stroke="#000" stroke-width="1"/>
<line x1="567" y1="473" x2="601" y2="444" stroke="#e00000" stroke-width="1"/>
<text x="569" y="455.5" font-size="9.5" text-anchor="start" fill="#1c1c1c" font-weight="normal" >abc</text>
<polygon points="573.28,458 577.42,458 577.42,463.85 581.2,463.85 575.35,470.6 569.5,463.85 573.28,463.85" fill="#c8c8c8" stroke="#b0b0b0" stroke-width="0.8" opacity="0.85"/>
<text x="598.5" y="470.5" font-size="9.5" text-anchor="end" fill="#1c1c1c" font-weight="normal" >αβ0</text>
<polyline points="602,458.5 637.5,458.5 637.5,508.5 760,508.5" fill="none" stroke="#000" stroke-width="1" />
<polygon points="760,508.5 752.8,504.5 752.8,512.5" fill="#000"/>
<rect x="564.5" y="543" width="80" height="36" fill="#000" opacity="0.33" filter="url(#sh)"/>
<rect x="562" y="540.5" width="80" height="36" fill="url(#grad)" stroke="#000" stroke-width="1"/>
<text x="565" y="561.5" font-size="9" text-anchor="start" fill="#1c1c1c" font-weight="normal" >angle</text>
<text x="638" y="561.5" font-size="9" text-anchor="end" fill="#1c1c1c" font-weight="normal" >speed</text>
<text x="601.5" y="589" font-size="10" text-anchor="middle" fill="#1c1c1c" font-weight="normal" >Derivator</text>
<polyline points="642,558.5 681,558.5" fill="none" stroke="#000" stroke-width="1" />
<polygon points="681,558.5 673.8,554.5 673.8,562.5" fill="#000"/>
<circle cx="660.5" cy="558.5" r="2.6" fill="#000"/>
<rect x="684" y="550" width="50" height="22" fill="#000" opacity="0.33" filter="url(#sh)"/>
<rect x="681.5" y="547.5" width="50" height="22" fill="#fff" stroke="#e00000" stroke-width="1.3"/>
<polygon points="686.52,557 689.84,557 689.84,561.68 692.86,561.68 688.18,567.08 683.5,561.68 686.52,561.68" fill="#c8c8c8" stroke="#b0b0b0" stroke-width="0.8" opacity="0.85"/>
<text x="691" y="562" font-size="10" text-anchor="start" fill="#1c1c1c" font-weight="normal" >speed</text>
<polyline points="660.5,303.5 660.5,558.5" fill="none" stroke="#000" stroke-width="1" />
<circle cx="660.5" cy="438.5" r="2.6" fill="#000"/>
<polyline points="660.5,303.5 760,303.5" fill="none" stroke="#000" stroke-width="1" />
<polygon points="760,303.5 752.8,299.5 752.8,307.5" fill="#000"/>
<polyline points="660.5,438.5 760,438.5" fill="none" stroke="#000" stroke-width="1" />
<polygon points="760,438.5 752.8,434.5 752.8,442.5" fill="#000"/>
<rect x="549" y="242" width="55" height="28" fill="#000" opacity="0.33" filter="url(#sh)"/>
<rect x="546.5" y="239.5" width="55" height="28" fill="#fff" stroke="#000" stroke-width="1"/>
<polyline points="563,261.5 573.5,261.5 573.5,240.5 585,240.5" fill="none" stroke="#000" stroke-width="1" />
<polygon points="553.07,252.5 556.98,252.5 556.98,258.02 560.55,258.02 555.02,264.4 549.5,258.02 553.07,258.02" fill="#c8c8c8" stroke="#b0b0b0" stroke-width="0.8" opacity="0.85"/>
<polyline points="602,253.5 646.5,253.5 646.5,268.5 660,268.5" fill="none" stroke="#000" stroke-width="1" />
<polygon points="660,268.5 652.8,264.5 652.8,272.5" fill="#000"/>
<ellipse cx="668" cy="268.5" rx="2.6" ry="2.1" fill="#fff" stroke="#000"/>
<ellipse cx="668" cy="288.5" rx="2.6" ry="2.1" fill="#fff" stroke="#000"/>
<ellipse cx="685" cy="278.5" rx="2.6" ry="2.1" fill="#fff" stroke="#000"/>
<polyline points="660,268.5 665.4,268.5" fill="none" stroke="#000" stroke-width="1" />
<polyline points="660,288.5 665.4,288.5" fill="none" stroke="#000" stroke-width="1" />
<polyline points="687.6,278.5 690.5,278.5" fill="none" stroke="#000" stroke-width="1" />
<line x1="669.8" y1="270" x2="683.2" y2="277" stroke="#000"/>
<polyline points="692,278.5 760,278.5" fill="none" stroke="#000" stroke-width="1" />
<polygon points="760,278.5 752.8,274.5 752.8,282.5" fill="#000"/>
<rect x="549" y="277" width="55" height="28" fill="#000" opacity="0.33" filter="url(#sh)"/>
<rect x="546.5" y="274.5" width="55" height="28" fill="#fff" stroke="#e00000" stroke-width="1.3"/>
<text x="574" y="285.5" font-size="10" text-anchor="middle" fill="#1c1c1c" font-weight="normal" >speed_ref</text>
<text x="572.5" y="297.5" font-size="10" text-anchor="middle" fill="#1c1c1c" font-weight="normal" >0</text>
<polygon points="552.57,286 556.48,286 556.48,291.52 560.05,291.52 554.52,297.9 549,291.52 552.57,291.52" fill="#c8c8c8" stroke="#b0b0b0" stroke-width="0.8" opacity="0.85"/>
<polyline points="602,288.5 660,288.5" fill="none" stroke="#e00000" stroke-width="1" />
<polygon points="660,288.5 652.8,284.5 652.8,292.5" fill="#e00000"/>
<rect x="684" y="320" width="55" height="22" fill="#000" opacity="0.33" filter="url(#sh)"/>
<rect x="681.5" y="317.5" width="55" height="22" fill="#fff" stroke="#e00000" stroke-width="1.3"/>
<text x="708" y="327" font-size="10" text-anchor="middle" fill="#1c1c1c" font-weight="normal" >Kp</text>
<text x="708" y="336.5" font-size="10" text-anchor="middle" fill="#1c1c1c" font-weight="normal" >0.1</text>
<polygon points="687.02,327 690.34,327 690.34,331.68 693.36,331.68 688.68,337.08 684,331.68 687.02,331.68" fill="#c8c8c8" stroke="#b0b0b0" stroke-width="0.8" opacity="0.85"/>
<polyline points="737,328.5 760,328.5" fill="none" stroke="#e00000" stroke-width="1" />
<polygon points="760,328.5 752.8,324.5 752.8,332.5" fill="#e00000"/>
<rect x="684" y="345" width="55" height="22" fill="#000" opacity="0.33" filter="url(#sh)"/>
<rect x="681.5" y="342.5" width="55" height="22" fill="#fff" stroke="#e00000" stroke-width="1.3"/>
<text x="708" y="352" font-size="10" text-anchor="middle" fill="#1c1c1c" font-weight="normal" >Ki</text>
<text x="708" y="361.5" font-size="10" text-anchor="middle" fill="#1c1c1c" font-weight="normal" >8</text>
<polygon points="687.02,352 690.34,352 690.34,356.68 693.36,356.68 688.68,362.08 684,356.68 687.02,356.68" fill="#c8c8c8" stroke="#b0b0b0" stroke-width="0.8" opacity="0.85"/>
<polyline points="737,353.5 760,353.5" fill="none" stroke="#e00000" stroke-width="1" />
<polygon points="760,353.5 752.8,349.5 752.8,357.5" fill="#e00000"/>
<polygon points="684,370.5 728.5,370.5 743.5,381 728.5,391.5 684,391.5" fill="#000" opacity="0.33" filter="url(#sh)"/>
<polygon points="681.5,368 726,368 741,378.5 726,389 681.5,389" fill="#fff" stroke="#000" stroke-width="1"/>
<text x="702.25" y="382.1" font-size="10" text-anchor="middle" fill="#1c1c1c" font-weight="normal" >PI_reset</text>
<polyline points="741,378.5 760,378.5" fill="none" stroke="#000" stroke-width="1" />
<polygon points="760,378.5 752.8,374.5 752.8,382.5" fill="#000"/>
<rect x="764" y="267" width="105" height="128" fill="#000" opacity="0.33" filter="url(#sh)"/>
<rect x="761.5" y="264.5" width="105" height="128" fill="url(#grad)" stroke="#000" stroke-width="1"/>
<text x="814" y="258.5" font-size="10" text-anchor="middle" fill="#1c1c1c" font-weight="normal" >Speed control</text>
<text x="764" y="281" font-size="9" text-anchor="start" fill="#1c1c1c" font-weight="normal" >Speed_ref</text>
<text x="764" y="306" font-size="9" text-anchor="start" fill="#1c1c1c" font-weight="normal" >Speed_meas</text>
<text x="764" y="331" font-size="9" text-anchor="start" fill="#1c1c1c" font-weight="normal" >Kp</text>
<text x="764" y="356" font-size="9" text-anchor="start" fill="#1c1c1c" font-weight="normal" >Ki</text>
<text x="764" y="381" font-size="9" text-anchor="start" fill="#1c1c1c" font-weight="normal" >reset</text>
<text x="863.5" y="331" font-size="9" text-anchor="end" fill="#1c1c1c" font-weight="normal" >Tem_ref</text>
<polyline points="867,328.5 970,328.5" fill="none" stroke="#000" stroke-width="1" />
<polygon points="970,328.5 962.8,324.5 962.8,332.5" fill="#000"/>
<circle cx="894.5" cy="328.5" r="2.6" fill="#000"/>
<polyline points="894.5,328.5 894.5,298.5 901,298.5" fill="none" stroke="#000" stroke-width="1" />
<polygon points="901,298.5 893.8,294.5 893.8,302.5" fill="#000"/>
<rect x="904" y="290" width="55" height="22" fill="#000" opacity="0.33" filter="url(#sh)"/>
<rect x="901.5" y="287.5" width="55" height="22" fill="#fff" stroke="#e00000" stroke-width="1.3"/>
<polygon points="906.52,297.5 909.84,297.5 909.84,302.18 912.86,302.18 908.18,307.58 903.5,302.18 906.52,302.18" fill="#c8c8c8" stroke="#b0b0b0" stroke-width="0.8" opacity="0.85"/>
<text x="911" y="302" font-size="10" text-anchor="start" fill="#1c1c1c" font-weight="normal" >Tem_ref</text>
<rect x="764" y="425" width="105" height="31" fill="#000" opacity="0.33" filter="url(#sh)"/>
<rect x="761.5" y="422.5" width="105" height="31" fill="url(#grad)" stroke="#000" stroke-width="1"/>
<text x="764" y="441" font-size="9" text-anchor="start" fill="#1c1c1c" font-weight="normal" >Speed</text>
<text x="863.5" y="441" font-size="9" text-anchor="end" fill="#1c1c1c" font-weight="normal" >Phi_ref_mag</text>
<text x="814" y="466.5" font-size="10" text-anchor="middle" fill="#1c1c1c" font-weight="normal" >Field weakening</text>
<polyline points="867,438.5 892.5,438.5 892.5,357.5 970,357.5" fill="none" stroke="#000" stroke-width="1" />
<polygon points="970,357.5 962.8,353.5 962.8,361.5" fill="#000"/>
<rect x="764" y="482" width="105" height="107" fill="#000" opacity="0.33" filter="url(#sh)"/>
<rect x="761.5" y="479.5" width="105" height="107" fill="url(#grad)" stroke="#000" stroke-width="1"/>
<text x="764" y="511" font-size="9" text-anchor="start" fill="#1c1c1c" font-weight="normal" >Is_ab0</text>
<text x="764" y="566" font-size="9" text-anchor="start" fill="#1c1c1c" font-weight="normal" >Theta_m</text>
<text x="863.5" y="501" font-size="9" text-anchor="end" fill="#1c1c1c" font-weight="normal" >Tem_est</text>
<text x="863.5" y="536" font-size="9" text-anchor="end" fill="#1c1c1c" font-weight="normal" >Phi_est_mag</text>
<text x="863.5" y="571" font-size="9" text-anchor="end" fill="#1c1c1c" font-weight="normal" >Phi_est_angle</text>
<text x="814" y="599.5" font-size="10" text-anchor="middle" fill="#1c1c1c" font-weight="normal" >Flux and torque estimator</text>
<polyline points="867,498.5 911.5,498.5 911.5,388.5 970,388.5" fill="none" stroke="#000" stroke-width="1" />
<polygon points="970,388.5 962.8,384.5 962.8,392.5" fill="#000"/>
<polyline points="867,533.5 931.5,533.5 931.5,418.5 970,418.5" fill="none" stroke="#000" stroke-width="1" />
<polygon points="970,418.5 962.8,414.5 962.8,422.5" fill="#000"/>
<polyline points="867,568.5 951.5,568.5 951.5,448.5 970,448.5" fill="none" stroke="#000" stroke-width="1" />
<polygon points="970,448.5 962.8,444.5 962.8,452.5" fill="#000"/>
<rect x="764" y="632" width="105" height="52" fill="#000" opacity="0.33" filter="url(#sh)"/>
<rect x="761.5" y="629.5" width="105" height="52" fill="url(#grad)" stroke="#000" stroke-width="1"/>
<text x="764" y="660.5" font-size="9" text-anchor="start" fill="#1c1c1c" font-weight="normal" >User_input</text>
<text x="863.5" y="645.5" font-size="9" text-anchor="end" fill="#1c1c1c" font-weight="normal" >Rotor_init</text>
<text x="863.5" y="670.5" font-size="9" text-anchor="end" fill="#1c1c1c" font-weight="normal" >PI_reset</text>
<text x="814" y="694.5" font-size="10" text-anchor="middle" fill="#1c1c1c" font-weight="normal" >Operation state</text>
<rect x="629" y="645" width="70" height="32" fill="#000" opacity="0.33" filter="url(#sh)"/>
<rect x="626.5" y="642.5" width="70" height="32" fill="#fff" stroke="#e00000" stroke-width="1.3"/>
<text x="629" y="654" font-size="10" text-anchor="start" fill="#1c1c1c" font-weight="normal" >init_procedure</text>
<text x="659" y="668" font-size="10" text-anchor="middle" fill="#1c1c1c" font-weight="normal" >0</text>
<polygon points="632.78,658 636.92,658 636.92,663.85 640.7,663.85 634.85,670.6 629,663.85 632.78,663.85" fill="#c8c8c8" stroke="#b0b0b0" stroke-width="0.8" opacity="0.85"/>
<polyline points="697,658.5 760,658.5" fill="none" stroke="#e00000" stroke-width="1" />
<polygon points="760,658.5 752.8,654.5 752.8,662.5" fill="#e00000"/>
<text x="615" y="693" font-size="10" text-anchor="start" fill="#1c1c1c" font-weight="normal" >Choices are:</text>
<text x="615" y="705" font-size="10" text-anchor="start" fill="#1c1c1c" font-weight="normal" >0: Normal DTC operation</text>
<text x="615" y="717" font-size="10" text-anchor="start" fill="#1c1c1c" font-weight="normal" >1: Rotor position forced to θ=0</text>
<polyline points="867,643.5 901,643.5" fill="none" stroke="#000" stroke-width="1" />
<polygon points="901,643.5 893.8,639.5 893.8,647.5" fill="#000"/>
<polygon points="904,646 919,635 973.5,635 973.5,657 919,657" fill="#000" opacity="0.33" filter="url(#sh)"/>
<polygon points="901.5,643.5 916.5,632.5 971,632.5 971,654.5 916.5,654.5" fill="#fff" stroke="#000" stroke-width="1"/>
<text x="942.25" y="647.1" font-size="10" text-anchor="middle" fill="#1c1c1c" font-weight="normal" >[init_rotor]</text>
<polyline points="867,668.5 901,668.5" fill="none" stroke="#000" stroke-width="1" />
<polygon points="901,668.5 893.8,664.5 893.8,672.5" fill="#000"/>
<polygon points="904,671 919,660 973.5,660 973.5,682 919,682" fill="#000" opacity="0.33" filter="url(#sh)"/>
<polygon points="901.5,668.5 916.5,657.5 971,657.5 971,679.5 916.5,679.5" fill="#fff" stroke="#000" stroke-width="1"/>
<text x="942.25" y="672.1" font-size="10" text-anchor="middle" fill="#1c1c1c" font-weight="normal" >PI_reset</text>
<rect x="974" y="313" width="105" height="155" fill="#000" opacity="0.33" filter="url(#sh)"/>
<rect x="971.5" y="310.5" width="105" height="155" fill="url(#grad)" stroke="#000" stroke-width="1"/>
<text x="1024" y="304" font-size="10" text-anchor="middle" fill="#1c1c1c" font-weight="normal" >Flux and torque control</text>
<text x="974" y="331" font-size="9" text-anchor="start" fill="#1c1c1c" font-weight="normal" >Tem_ref</text>
<text x="974" y="360" font-size="9" text-anchor="start" fill="#1c1c1c" font-weight="normal" >Phi_ref_mag</text>
<text x="974" y="391" font-size="9" text-anchor="start" fill="#1c1c1c" font-weight="normal" >Tem_est</text>
<text x="974" y="421" font-size="9" text-anchor="start" fill="#1c1c1c" font-weight="normal" >Phi_est_mag</text>
<text x="974" y="451" font-size="9" text-anchor="start" fill="#1c1c1c" font-weight="normal" >Phi_est_angle</text>
<text x="1073" y="391" font-size="9" text-anchor="end" fill="#1c1c1c" font-weight="normal" >Switch_state</text>
<polyline points="1077,388.5 1245,388.5" fill="none" stroke="#000" stroke-width="1" />
<polygon points="1245,388.5 1237.8,384.5 1237.8,392.5" fill="#000"/>
<rect x="1104" y="318" width="90" height="36" fill="#000" opacity="0.33" filter="url(#sh)"/>
<rect x="1101.5" y="315.5" width="90" height="36" fill="url(#grad)" stroke="#000" stroke-width="1"/>
<text x="1188" y="335.5" font-size="9" text-anchor="end" fill="#1c1c1c" font-weight="normal" >d</text>
<text x="1146" y="297" font-size="10" text-anchor="middle" fill="#1c1c1c" font-weight="normal" >Rotor position</text>
<text x="1146" y="309" font-size="10" text-anchor="middle" fill="#1c1c1c" font-weight="normal" >initialisation</text>
<polyline points="1191.5,333.5 1214.5,333.5 1214.5,358.5 1245,358.5" fill="none" stroke="#000" stroke-width="1" />
<polygon points="1245,358.5 1237.8,354.5 1237.8,362.5" fill="#000"/>
<polygon points="1124,365 1178.5,365 1193.5,376 1178.5,387 1124,387" fill="#000" opacity="0.33" filter="url(#sh)"/>
<polygon points="1121.5,362.5 1176,362.5 1191,373.5 1176,384.5 1121.5,384.5" fill="#fff" stroke="#000" stroke-width="1"/>
<text x="1147.25" y="377.1" font-size="10" text-anchor="middle" fill="#1c1c1c" font-weight="normal" >[init_rotor]</text>
<polyline points="1191,373.5 1245,373.5" fill="none" stroke="#000" stroke-width="1" />
<polygon points="1245,373.5 1237.8,369.5 1237.8,377.5" fill="#000"/>
<rect x="1249" y="356" width="45" height="40" fill="#000" opacity="0.33" filter="url(#sh)"/>
<rect x="1246.5" y="353.5" width="45" height="40" fill="#fff" stroke="#000" stroke-width="1"/>
<polyline points="1247,358.5 1263,358.5" fill="none" stroke="#000" stroke-width="1" />
<circle cx="1265" cy="358.5" r="1.8" fill="#fff" stroke="#000" stroke-width="0.9"/>
<polyline points="1247,388.5 1263,388.5" fill="none" stroke="#000" stroke-width="1" />
<circle cx="1265" cy="388.5" r="1.8" fill="#fff" stroke="#000" stroke-width="0.9"/>
<polyline points="1247,373.5 1252.5,373.5" fill="none" stroke="#000" stroke-width="1" />
<polyline points="1252.5,368 1252.5,379" fill="none" stroke="#000" stroke-width="1" />
<text x="1256" y="377" font-size="10" text-anchor="start" fill="#1c1c1c" font-weight="normal" >&gt; 0</text>
<polyline points="1265.5,360 1282,373.5 1292,373.5" fill="none" stroke="#000" stroke-width="1" />
<polyline points="1292,373.5 1320,373.5" fill="none" stroke="#000" stroke-width="1" />
<polygon points="1320,373.5 1312.8,369.5 1312.8,377.5" fill="#000"/>
<rect x="1323.5" y="306.5" width="6" height="139" fill="#000" opacity="0.33" filter="url(#sh)"/>
<rect x="1321" y="304" width="6" height="139" fill="#000"/>
<polyline points="1327,328.5 1350,328.5" fill="none" stroke="#000" stroke-width="1" />
<polygon points="1350,328.5 1342.8,324.5 1342.8,332.5" fill="#000"/>
<polyline points="1327,373.5 1350,373.5" fill="none" stroke="#000" stroke-width="1" />
<polygon points="1350,373.5 1342.8,369.5 1342.8,377.5" fill="#000"/>
<polyline points="1327,418.5 1350,418.5" fill="none" stroke="#000" stroke-width="1" />
<polygon points="1350,418.5 1342.8,414.5 1342.8,422.5" fill="#000"/>
<rect x="1354" y="310" width="65" height="42" fill="#000" opacity="0.33" filter="url(#sh)"/>
<rect x="1351.5" y="307.5" width="65" height="42" fill="#fff" stroke="#000" stroke-width="1"/>
<rect x="1352" y="327.5" width="64" height="21.5" fill="#ff0000"/>
<polygon points="1358.28,333.5 1362.98,333.5 1362.98,340.13 1367.26,340.13 1360.63,347.78 1354,340.13 1358.28,340.13" fill="#b83030" stroke="#ff7a7a" stroke-width="1.3" opacity="0.85"/>
<text x="1373" y="322" font-size="10" text-anchor="start" fill="#1c1c1c" font-weight="normal" >BB0</text>
<text x="1413" y="322" font-size="10" text-anchor="end" fill="#1c1c1c" font-weight="normal" >0H</text>
<text x="1354" y="331.7" font-size="9" text-anchor="start" fill="#111" font-weight="normal" >in</text>
<text x="1383" y="338" font-size="10" text-anchor="middle" fill="#fff" font-weight="normal" >DO</text>
<text x="1383" y="347" font-size="10" text-anchor="middle" fill="#fff" font-weight="normal" >PWM</text>
<text x="1413" y="342.5" font-size="10" text-anchor="end" fill="#111" font-weight="normal" >0L</text>
<rect x="1354" y="355" width="65" height="42" fill="#000" opacity="0.33" filter="url(#sh)"/>
<rect x="1351.5" y="352.5" width="65" height="42" fill="#fff" stroke="#000" stroke-width="1"/>
<rect x="1352" y="372.5" width="64" height="21.5" fill="#ff0000"/>
<polygon points="1358.28,378.5 1362.98,378.5 1362.98,385.13 1367.26,385.13 1360.63,392.78 1354,385.13 1358.28,385.13" fill="#b83030" stroke="#ff7a7a" stroke-width="1.3" opacity="0.85"/>
<text x="1373" y="367" font-size="10" text-anchor="start" fill="#1c1c1c" font-weight="normal" >BB0</text>
<text x="1413" y="367" font-size="10" text-anchor="end" fill="#1c1c1c" font-weight="normal" >1H</text>
<text x="1354" y="376.7" font-size="9" text-anchor="start" fill="#111" font-weight="normal" >in</text>
<text x="1383" y="383" font-size="10" text-anchor="middle" fill="#fff" font-weight="normal" >DO</text>
<text x="1383" y="392" font-size="10" text-anchor="middle" fill="#fff" font-weight="normal" >PWM</text>
<text x="1413" y="387.5" font-size="10" text-anchor="end" fill="#111" font-weight="normal" >1L</text>
<rect x="1354" y="400" width="65" height="42" fill="#000" opacity="0.33" filter="url(#sh)"/>
<rect x="1351.5" y="397.5" width="65" height="42" fill="#fff" stroke="#000" stroke-width="1"/>
<rect x="1352" y="417.5" width="64" height="21.5" fill="#ff0000"/>
<polygon points="1358.28,423.5 1362.98,423.5 1362.98,430.13 1367.26,430.13 1360.63,437.78 1354,430.13 1358.28,430.13" fill="#b83030" stroke="#ff7a7a" stroke-width="1.3" opacity="0.85"/>
<text x="1373" y="412" font-size="10" text-anchor="start" fill="#1c1c1c" font-weight="normal" >BB0</text>
<text x="1413" y="412" font-size="10" text-anchor="end" fill="#1c1c1c" font-weight="normal" >2H</text>
<text x="1354" y="421.7" font-size="9" text-anchor="start" fill="#111" font-weight="normal" >in</text>
<text x="1383" y="428" font-size="10" text-anchor="middle" fill="#fff" font-weight="normal" >DO</text>
<text x="1383" y="437" font-size="10" text-anchor="middle" fill="#fff" font-weight="normal" >PWM</text>
<text x="1413" y="432.5" font-size="10" text-anchor="end" fill="#111" font-weight="normal" >2L</text>
<polyline points="1417,318.5 1432.5,318.5 1432.5,323.5 1455,323.5" fill="none" stroke="#000" stroke-width="1" />
<polygon points="1455,323.5 1447.8,319.5 1447.8,327.5" fill="#000"/>
<polyline points="1417,338.5 1436.5,338.5 1436.5,343.5 1455,343.5" fill="none" stroke="#000" stroke-width="1" />
<polygon points="1455,343.5 1447.8,339.5 1447.8,347.5" fill="#000"/>
<polyline points="1417,363.5 1455,363.5" fill="none" stroke="#000" stroke-width="1" />
<polygon points="1455,363.5 1447.8,359.5 1447.8,367.5" fill="#000"/>
<polyline points="1417,383.5 1455,383.5" fill="none" stroke="#000" stroke-width="1" />
<polygon points="1455,383.5 1447.8,379.5 1447.8,387.5" fill="#000"/>
<polyline points="1417,408.5 1436.5,408.5 1436.5,403.5 1455,403.5" fill="none" stroke="#000" stroke-width="1" />
<polygon points="1455,403.5 1447.8,399.5 1447.8,407.5" fill="#000"/>
<polyline points="1417,428.5 1436.5,428.5 1436.5,423.5 1455,423.5" fill="none" stroke="#000" stroke-width="1" />
<polygon points="1455,423.5 1447.8,419.5 1447.8,427.5" fill="#000"/>
<rect x="1458.5" y="312.5" width="6" height="126" fill="#000" opacity="0.33" filter="url(#sh)"/>
<rect x="1456" y="310" width="6" height="126" fill="#000"/>
<polyline points="1462,373.5 1495,373.5" fill="none" stroke="#000" stroke-width="1" />
<polygon points="1495,373.5 1487.8,369.5 1487.8,377.5" fill="#000"/>
<rect x="1498.5" y="366.5" width="6" height="39" fill="#000" opacity="0.33" filter="url(#sh)"/>
<rect x="1496" y="364" width="6" height="39" fill="#000"/>
<polyline points="1475.5,513.5 1475.5,393.5 1495,393.5" fill="none" stroke="#000" stroke-width="1" />
<polygon points="1495,393.5 1487.8,389.5 1487.8,397.5" fill="#000"/>
<polyline points="1502,383.5 1530,383.5" fill="none" stroke="#000" stroke-width="1" />
<polygon points="1530,383.5 1522.8,379.5 1522.8,387.5" fill="#000"/>
<rect x="1533.5" y="379" width="31" height="14" fill="#000" opacity="0.33" filter="url(#sh)"/>
<rect x="1531.5" y="377" width="30.5" height="14" rx="7" fill="#fff" stroke="#000"/>
<text x="1546.5" y="387.5" font-size="10" text-anchor="middle" fill="#1c1c1c" font-weight="normal" >1</text>
<text x="1546.5" y="402" font-size="10" text-anchor="middle" fill="#1c1c1c" font-weight="normal" >Control outputs</text>
<text x="1271" y="467" font-size="10" text-anchor="middle" fill="#1c1c1c" font-weight="normal" >Braking chopper</text>
<text x="1271" y="479" font-size="10" text-anchor="middle" fill="#1c1c1c" font-weight="normal" >control</text>
<rect x="1229" y="488" width="90" height="36" fill="#000" opacity="0.33" filter="url(#sh)"/>
<rect x="1226.5" y="485.5" width="90" height="36" fill="url(#grad)" stroke="#000" stroke-width="1"/>
<text x="1229" y="505.8" font-size="9" text-anchor="start" fill="#1c1c1c" font-weight="normal" >Vdc</text>
<text x="1313" y="505.8" font-size="9" text-anchor="end" fill="#1c1c1c" font-weight="normal" >d</text>
<polygon points="1134,496 1183.5,496 1198.5,506 1183.5,516 1134,516" fill="#000" opacity="0.33" filter="url(#sh)"/>
<polygon points="1131.5,493.5 1181,493.5 1196,503.5 1181,513.5 1131.5,513.5" fill="#fff" stroke="#000" stroke-width="1"/>
<text x="1154.75" y="507.1" font-size="10" text-anchor="middle" fill="#1c1c1c" font-weight="normal" >[Vdc]</text>
<polyline points="1196,503.5 1226,503.5" fill="none" stroke="#000" stroke-width="1" />
<polygon points="1226,503.5 1218.8,499.5 1218.8,507.5" fill="#000"/>
<polyline points="1317,503.5 1351,503.5" fill="none" stroke="#000" stroke-width="1" />
<polygon points="1351,503.5 1343.8,499.5 1343.8,507.5" fill="#000"/>
<rect x="1354" y="495" width="65" height="42" fill="#000" opacity="0.33" filter="url(#sh)"/>
<rect x="1351.5" y="492.5" width="65" height="42" fill="#fff" stroke="#000" stroke-width="1"/>
<rect x="1352" y="513" width="64" height="21" fill="#ff0000"/>
<polygon points="1357.99,516 1362.36,516 1362.36,522.17 1366.35,522.17 1360.17,529.3 1354,522.17 1357.99,522.17" fill="#b83030" stroke="#ff7a7a" stroke-width="1.3" opacity="0.85"/>
<text x="1354" y="506.5" font-size="10" text-anchor="start" fill="#1c1c1c" font-weight="normal" >D</text>
<text x="1372" y="506.5" font-size="10" text-anchor="start" fill="#1c1c1c" font-weight="normal" >BB0</text>
<text x="1413" y="517" font-size="10" text-anchor="end" fill="#111" font-weight="normal" >LN6</text>
<text x="1382" y="522.5" font-size="10" text-anchor="middle" fill="#fff" font-weight="normal" >CB</text>
<text x="1382" y="531.5" font-size="10" text-anchor="middle" fill="#fff" font-weight="normal" >PWM</text>
<polygon points="1244,536 1303.5,536 1318.5,546 1303.5,556 1244,556" fill="#000" opacity="0.33" filter="url(#sh)"/>
<polygon points="1241.5,533.5 1301,533.5 1316,543.5 1301,553.5 1241.5,553.5" fill="#fff" stroke="#000" stroke-width="1"/>
<text x="1242.5" y="547.1" font-size="10" text-anchor="start" fill="#1c1c1c" font-weight="normal" >[pwm_clock]</text>
<polyline points="1316,543.5 1334.5,543.5 1334.5,523.5 1351,523.5" fill="none" stroke="#000" stroke-width="1" />
<polygon points="1351,523.5 1343.8,519.5 1343.8,527.5" fill="#000"/>
<polyline points="1417,513.5 1475.5,513.5" fill="none" stroke="#000" stroke-width="1" />
<text x="1302.5" y="642" font-size="10" text-anchor="middle" fill="#1d3156" font-weight="bold" >Direct Torque Control of a Permanent Magnet Synchronous Motor</text>
<text x="1302.5" y="654.5" font-size="10" text-anchor="middle" fill="#2a3d66" font-weight="normal" >(c) Imperix Switzerland 2020</text>
<text x="85.5" y="599" font-size="10" text-anchor="start" fill="#1c1c1c" font-weight="normal" >Phi_plant, Omega_plant and Tem_plant</text>
<text x="85.5" y="611" font-size="10" text-anchor="start" fill="#1c1c1c" font-weight="normal" >are only used in simulation plots.</text></svg>
<div class="t" style="left:7px;top:759px;font-size:11px">Ready</div>
<div class="t" style="left:815px;top:759px;font-size:11px">100%</div>
<div class="t" style="left:1507px;top:759px;color:#1a2a8a;font-size:11.7px">VariableStepAuto</div>
<div class="a" style="left:1605px;top:756px;width:1px;height:18px;background:#d0d0d0"></div>
<svg class="a" style="left:1612px;top:762px" width="10" height="10"><g fill="#bbb"><rect x="7" y="1" width="2" height="2"/><rect x="4" y="4" width="2" height="2"/><rect x="7" y="4" width="2" height="2"/><rect x="1" y="7" width="2" height="2"/><rect x="4" y="7" width="2" height="2"/><rect x="7" y="7" width="2" height="2"/></g></svg>
<div class="a" style="left:0;top:0;width:1625px;height:776px;border:1px solid #333;border-bottom:1px solid #222"></div></div></body></html>
